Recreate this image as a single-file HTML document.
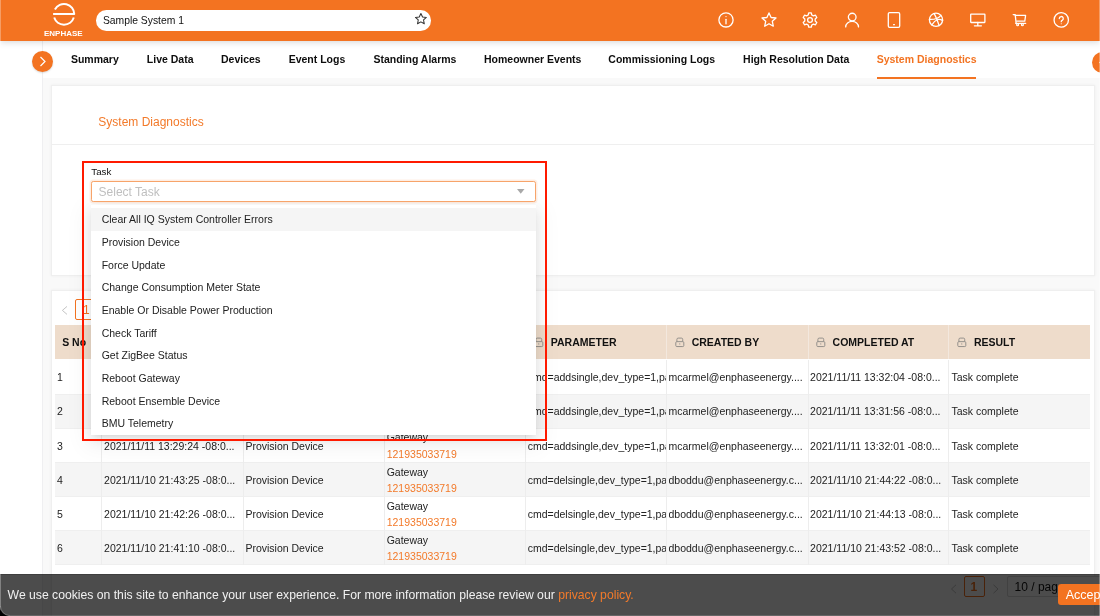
<!DOCTYPE html>
<html><head><meta charset="utf-8"><style>
*{box-sizing:border-box;margin:0;padding:0}
html,body{width:1100px;height:616px;overflow:hidden;background:#fff;font-family:"Liberation Sans",sans-serif;color:#222}
.a{position:absolute}
.t{position:absolute;white-space:nowrap;line-height:1}
.tab{position:absolute;top:54.4px;font-size:10.5px;font-weight:bold;color:#1a1a1a;line-height:1;white-space:nowrap}
.card{position:absolute;background:#fff;border:1px solid #efefef;box-shadow:0 0 3px rgba(0,0,0,.05)}
.hd{position:absolute;font-size:10.5px;font-weight:bold;color:#111;line-height:1;white-space:nowrap}
.cell{position:absolute;font-size:10.5px;color:#222;line-height:1;white-space:nowrap;overflow:hidden;padding:2px 0 3px;margin-top:-2px}
.vl{position:absolute;width:1px;background:#ededed}
.dd{position:absolute;left:10.5px;font-size:10.5px;color:#222;line-height:1;white-space:nowrap}
svg{position:absolute;overflow:visible}
#root{position:absolute;left:0;top:0;width:1100px;height:616px;will-change:transform}
</style></head><body><div id="root">
<div class="a" style="left:42px;top:40px;width:1058px;height:576px;background:#f9f9f9"></div>
<div class="a" style="left:42.4px;top:40px;width:1px;height:576px;background:#efeff1"></div>
<div class="a" style="left:43px;top:40px;width:1057px;height:38px;background:#fff"></div>
<div class="tab" style="left:70.9px;color:#0d0d0d">Summary</div>
<div class="tab" style="left:146.8px;color:#0d0d0d">Live Data</div>
<div class="tab" style="left:221px;color:#0d0d0d">Devices</div>
<div class="tab" style="left:288.7px;color:#0d0d0d">Event Logs</div>
<div class="tab" style="left:373.4px;color:#0d0d0d">Standing Alarms</div>
<div class="tab" style="left:484px;color:#0d0d0d">Homeowner Events</div>
<div class="tab" style="left:608.3px;color:#0d0d0d">Commissioning Logs</div>
<div class="tab" style="left:743.1px;color:#0d0d0d">High Resolution Data</div>
<div class="tab" style="left:876.7px;color:#f37321">System Diagnostics</div>
<div class="a" style="left:876.7px;top:76.8px;width:99.5px;height:2px;background:#f37321"></div>
<div class="a" style="left:31.6px;top:51.2px;width:21px;height:21px;border-radius:50%;background:#f37321;box-shadow:0 1px 2px rgba(0,0,0,.15)"></div>
<svg style="left:31.6px;top:51.2px" width="21" height="21"><path d="M8.5 6 L13 10.5 L8.5 15" fill="none" stroke="#fff" stroke-width="1.2"/></svg>
<div class="a" style="left:1092px;top:51.6px;width:21px;height:21px;border-radius:50%;background:#f37321"></div>
<svg style="left:1092px;top:51.6px" width="21" height="21"><path d="M12.5 6 L8 10.5 L12.5 15" fill="none" stroke="#fff" stroke-width="1.2"/></svg>
<div class="a" style="left:0;top:0;width:1100px;height:40.5px;background:#f37321;box-shadow:0 1px 7px rgba(0,0,0,.17)"></div>
<div class="card" style="left:50.5px;top:85px;width:1044px;height:190.5px"></div>
<div class="a" style="left:51.5px;top:144.2px;width:1042px;height:1px;background:#efefef"></div>
<div class="t" style="left:98.3px;top:116px;font-size:12px;color:#f37a2a">System Diagnostics</div>
<div class="card" style="left:50.5px;top:290px;width:1044px;height:340px"></div>
<svg style="left:61px;top:305.5px" width="8" height="10"><path d="M6 0.4 L1.4 4.4 L6 8.4" fill="none" stroke="#c4c4c4" stroke-width="1"/></svg>
<div class="a" style="left:75.2px;top:299px;width:21px;height:20.7px;border:1px solid #f37321;border-radius:2px"></div>
<div class="t" style="left:83px;top:303.5px;font-size:12px;color:#f37321">1</div>
<div class="a" style="left:55.2px;top:325.4px;width:1034.3999999999999px;height:34px;background:#eedccb"></div>
<div class="a" style="left:55.2px;top:360.40px;width:1034.3999999999999px;height:34.17px;background:#fff"></div>
<div class="a" style="left:55.2px;top:393.57px;width:1034.3999999999999px;height:1px;background:#efefef"></div>
<div class="cell" style="left:57px;top:372.30px">1</div>
<div class="cell" style="left:527.7px;top:372.30px;width:138.69999999999993px">cmd=addsingle,dev_type=1,pa</div>
<div class="cell" style="left:668.5px;top:372.30px">mcarmel@enphaseenergy....</div>
<div class="cell" style="left:810.1px;top:372.30px">2021/11/11 13:32:04 -08:0...</div>
<div class="cell" style="left:951.4px;top:372.30px">Task complete</div>
<div class="a" style="left:55.2px;top:394.57px;width:1034.3999999999999px;height:34.17px;background:#f5f5f5"></div>
<div class="a" style="left:55.2px;top:427.74px;width:1034.3999999999999px;height:1px;background:#efefef"></div>
<div class="cell" style="left:57px;top:406.47px">2</div>
<div class="cell" style="left:527.7px;top:406.47px;width:138.69999999999993px">cmd=addsingle,dev_type=1,pa</div>
<div class="cell" style="left:668.5px;top:406.47px">mcarmel@enphaseenergy....</div>
<div class="cell" style="left:810.1px;top:406.47px">2021/11/11 13:31:56 -08:0...</div>
<div class="cell" style="left:951.4px;top:406.47px">Task complete</div>
<div class="a" style="left:55.2px;top:428.74px;width:1034.3999999999999px;height:34.17px;background:#fff"></div>
<div class="a" style="left:55.2px;top:461.91px;width:1034.3999999999999px;height:1px;background:#efefef"></div>
<div class="cell" style="left:57px;top:440.64px">3</div>
<div class="cell" style="left:104.1px;top:440.64px">2021/11/11 13:29:24 -08:0...</div>
<div class="cell" style="left:245.4px;top:440.64px">Provision Device</div>
<div class="cell" style="left:386.7px;top:432.34px">Gateway</div>
<div class="cell" style="left:386.7px;top:448.64px;color:#f37a2a">121935033719</div>
<div class="cell" style="left:527.7px;top:440.64px;width:138.69999999999993px">cmd=addsingle,dev_type=1,pa</div>
<div class="cell" style="left:668.5px;top:440.64px">mcarmel@enphaseenergy....</div>
<div class="cell" style="left:810.1px;top:440.64px">2021/11/11 13:32:01 -08:0...</div>
<div class="cell" style="left:951.4px;top:440.64px">Task complete</div>
<div class="a" style="left:55.2px;top:462.91px;width:1034.3999999999999px;height:34.17px;background:#f5f5f5"></div>
<div class="a" style="left:55.2px;top:496.08px;width:1034.3999999999999px;height:1px;background:#efefef"></div>
<div class="cell" style="left:57px;top:474.81px">4</div>
<div class="cell" style="left:104.1px;top:474.81px">2021/11/10 21:43:25 -08:0...</div>
<div class="cell" style="left:245.4px;top:474.81px">Provision Device</div>
<div class="cell" style="left:386.7px;top:466.51px">Gateway</div>
<div class="cell" style="left:386.7px;top:482.81px;color:#f37a2a">121935033719</div>
<div class="cell" style="left:527.7px;top:474.81px;width:138.69999999999993px">cmd=delsingle,dev_type=1,pa</div>
<div class="cell" style="left:668.5px;top:474.81px">dboddu@enphaseenergy.c...</div>
<div class="cell" style="left:810.1px;top:474.81px">2021/11/10 21:44:22 -08:0...</div>
<div class="cell" style="left:951.4px;top:474.81px">Task complete</div>
<div class="a" style="left:55.2px;top:497.08px;width:1034.3999999999999px;height:34.17px;background:#fff"></div>
<div class="a" style="left:55.2px;top:530.25px;width:1034.3999999999999px;height:1px;background:#efefef"></div>
<div class="cell" style="left:57px;top:508.98px">5</div>
<div class="cell" style="left:104.1px;top:508.98px">2021/11/10 21:42:26 -08:0...</div>
<div class="cell" style="left:245.4px;top:508.98px">Provision Device</div>
<div class="cell" style="left:386.7px;top:500.68px">Gateway</div>
<div class="cell" style="left:386.7px;top:516.98px;color:#f37a2a">121935033719</div>
<div class="cell" style="left:527.7px;top:508.98px;width:138.69999999999993px">cmd=delsingle,dev_type=1,pa</div>
<div class="cell" style="left:668.5px;top:508.98px">dboddu@enphaseenergy.c...</div>
<div class="cell" style="left:810.1px;top:508.98px">2021/11/10 21:44:13 -08:0...</div>
<div class="cell" style="left:951.4px;top:508.98px">Task complete</div>
<div class="a" style="left:55.2px;top:531.25px;width:1034.3999999999999px;height:34.17px;background:#f5f5f5"></div>
<div class="a" style="left:55.2px;top:564.42px;width:1034.3999999999999px;height:1px;background:#efefef"></div>
<div class="cell" style="left:57px;top:543.15px">6</div>
<div class="cell" style="left:104.1px;top:543.15px">2021/11/10 21:41:10 -08:0...</div>
<div class="cell" style="left:245.4px;top:543.15px">Provision Device</div>
<div class="cell" style="left:386.7px;top:534.85px">Gateway</div>
<div class="cell" style="left:386.7px;top:551.15px;color:#f37a2a">121935033719</div>
<div class="cell" style="left:527.7px;top:543.15px;width:138.69999999999993px">cmd=delsingle,dev_type=1,pa</div>
<div class="cell" style="left:668.5px;top:543.15px">dboddu@enphaseenergy.c...</div>
<div class="cell" style="left:810.1px;top:543.15px">2021/11/10 21:43:52 -08:0...</div>
<div class="cell" style="left:951.4px;top:543.15px">Task complete</div>
<div class="vl" style="left:100.8px;top:360.4px;height:205.02px"></div>
<div class="vl" style="left:100.8px;top:325.4px;height:34px;background:#f3e8de"></div>
<div class="vl" style="left:243.0px;top:360.4px;height:205.02px"></div>
<div class="vl" style="left:243.0px;top:325.4px;height:34px;background:#f3e8de"></div>
<div class="vl" style="left:383.5px;top:360.4px;height:205.02px"></div>
<div class="vl" style="left:383.5px;top:325.4px;height:34px;background:#f3e8de"></div>
<div class="vl" style="left:525.0px;top:360.4px;height:205.02px"></div>
<div class="vl" style="left:525.0px;top:325.4px;height:34px;background:#f3e8de"></div>
<div class="vl" style="left:665.9px;top:360.4px;height:205.02px"></div>
<div class="vl" style="left:665.9px;top:325.4px;height:34px;background:#f3e8de"></div>
<div class="vl" style="left:807.7px;top:360.4px;height:205.02px"></div>
<div class="vl" style="left:807.7px;top:325.4px;height:34px;background:#f3e8de"></div>
<div class="vl" style="left:948.1px;top:360.4px;height:205.02px"></div>
<div class="vl" style="left:948.1px;top:325.4px;height:34px;background:#f3e8de"></div>
<div class="hd" style="left:62.2px;top:337.3px">S No</div>
<svg style="left:534.0px;top:337px" width="10" height="10" viewBox="0 0 10 10"><rect x="0.8" y="4.65" width="8" height="4.9" rx="1" fill="none" stroke="#8f8c88" stroke-width="0.95"/><path d="M1.9 4.65 V2.4 A1.3 1.3 0 0 1 3.2 1.1 H6.4 A1.3 1.3 0 0 1 7.7 2.4 V4.65" fill="none" stroke="#8f8c88" stroke-width="0.95"/><circle cx="4.8" cy="6.9" r="0.55" fill="#8f8c88"/></svg>
<div class="hd" style="left:550.8px;top:337.3px">PARAMETER</div>
<svg style="left:674.9px;top:337px" width="10" height="10" viewBox="0 0 10 10"><rect x="0.8" y="4.65" width="8" height="4.9" rx="1" fill="none" stroke="#8f8c88" stroke-width="0.95"/><path d="M1.9 4.65 V2.4 A1.3 1.3 0 0 1 3.2 1.1 H6.4 A1.3 1.3 0 0 1 7.7 2.4 V4.65" fill="none" stroke="#8f8c88" stroke-width="0.95"/><circle cx="4.8" cy="6.9" r="0.55" fill="#8f8c88"/></svg>
<div class="hd" style="left:691.7px;top:337.3px">CREATED BY</div>
<svg style="left:815.8px;top:337px" width="10" height="10" viewBox="0 0 10 10"><rect x="0.8" y="4.65" width="8" height="4.9" rx="1" fill="none" stroke="#8f8c88" stroke-width="0.95"/><path d="M1.9 4.65 V2.4 A1.3 1.3 0 0 1 3.2 1.1 H6.4 A1.3 1.3 0 0 1 7.7 2.4 V4.65" fill="none" stroke="#8f8c88" stroke-width="0.95"/><circle cx="4.8" cy="6.9" r="0.55" fill="#8f8c88"/></svg>
<div class="hd" style="left:832.6px;top:337.3px">COMPLETED AT</div>
<svg style="left:957.1px;top:337px" width="10" height="10" viewBox="0 0 10 10"><rect x="0.8" y="4.65" width="8" height="4.9" rx="1" fill="none" stroke="#8f8c88" stroke-width="0.95"/><path d="M1.9 4.65 V2.4 A1.3 1.3 0 0 1 3.2 1.1 H6.4 A1.3 1.3 0 0 1 7.7 2.4 V4.65" fill="none" stroke="#8f8c88" stroke-width="0.95"/><circle cx="4.8" cy="6.9" r="0.55" fill="#8f8c88"/></svg>
<div class="hd" style="left:973.9px;top:337.3px">RESULT</div>
<div class="a" style="left:91px;top:205.4px;width:445px;height:229.8px;background:#fff;box-shadow:0 2.25px 4.5px -3px rgba(0,0,0,.12),0 4.5px 12px 0 rgba(0,0,0,.08),0 6.75px 21px 6px rgba(0,0,0,.05)"></div>
<div class="a" style="left:91px;top:207.6px;width:445px;height:23px;background:#f5f5f5"></div>
<div class="dd" style="left:101.7px;top:214.30px">Clear All IQ System Controller Errors</div>
<div class="dd" style="left:101.7px;top:236.97px">Provision Device</div>
<div class="dd" style="left:101.7px;top:259.64px">Force Update</div>
<div class="dd" style="left:101.7px;top:282.31px">Change Consumption Meter State</div>
<div class="dd" style="left:101.7px;top:304.98px">Enable Or Disable Power Production</div>
<div class="dd" style="left:101.7px;top:327.65px">Check Tariff</div>
<div class="dd" style="left:101.7px;top:350.32px">Get ZigBee Status</div>
<div class="dd" style="left:101.7px;top:372.99px">Reboot Gateway</div>
<div class="dd" style="left:101.7px;top:395.66px">Reboot Ensemble Device</div>
<div class="dd" style="left:101.7px;top:418.33px">BMU Telemetry</div>
<div class="t" style="left:91.3px;top:166.6px;font-size:9.75px;color:#111">Task</div>
<div class="a" style="left:90.5px;top:181.2px;width:445.5px;height:21px;border:1px solid #f7a46a;border-radius:2.25px;box-shadow:0 0 0 1.5px rgba(243,115,33,.12);background:#fff"></div>
<div class="t" style="left:98.6px;top:186px;font-size:12px;color:#bfbfbf">Select Task</div>
<svg style="left:517px;top:189.3px" width="8" height="5"><path d="M0 0 H7.5 L3.75 4.8 Z" fill="#a8a8a8"/></svg>
<div class="a" style="left:82px;top:160.8px;width:464.9px;height:279.8px;border:2px solid #ff1a00"></div>
<svg style="left:52px;top:2px" width="25" height="26" viewBox="0 0 25 26"><path d="M2.9 7.5 A10.3 10.3 0 0 1 22.3 12.2" fill="none" stroke="#fff" stroke-width="2"/><path d="M1.1 12 H22.9" stroke="#fff" stroke-width="2"/><path d="M2.2 15.5 A10.3 10.3 0 0 0 21.8 15.5" fill="none" stroke="#fff" stroke-width="2"/></svg>
<div class="t" style="left:44px;top:29.6px;font-size:8px;font-weight:bold;color:#fff;letter-spacing:0px">ENPHASE</div>
<div class="a" style="left:96px;top:9.9px;width:334.5px;height:20.7px;border-radius:10.35px;background:#fff"></div>
<div class="t" style="left:102.9px;top:16.2px;font-size:10.35px;color:#111">Sample System 1</div>
<svg style="left:413.6px;top:11.9px" width="13.8" height="13.8" viewBox="0 0 24 24"><path d="M12 2.5 L14.9 8.6 L21.5 9.4 L16.6 13.9 L17.9 20.5 L12 17.2 L6.1 20.5 L7.4 13.9 L2.5 9.4 L9.1 8.6 Z" fill="none" stroke="#333" stroke-width="1.8" stroke-linejoin="round"/></svg>
<svg style="left:717.4px;top:11.0px" width="18" height="18" viewBox="0 0 18 18"><circle cx="9" cy="8.9" r="7.1" fill="none" stroke="#fff" stroke-width="1.3" stroke-linecap="round" stroke-linejoin="round"/><path d="M9 8.3 V12.8" fill="none" stroke="#fff" stroke-width="1.3" stroke-linecap="round" stroke-linejoin="round"/><circle cx="9" cy="5.6" r="0.65" fill="#fff"/></svg>
<svg style="left:759.9px;top:11.0px" width="18" height="18" viewBox="0 0 18 18"><path d="M9 1.9 L11.1 6.5 L16 7 L12.3 10.3 L13.3 15.2 L9 12.7 L4.7 15.2 L5.7 10.3 L2 7 L6.9 6.5 Z" fill="none" stroke="#fff" stroke-width="1.3" stroke-linecap="round" stroke-linejoin="round"/></svg>
<svg style="left:801.0px;top:11.0px" width="18" height="18" viewBox="0 0 18 18"><path d="M7.7 1.8 H10.3 L10.8 4 L12.4 4.9 L14.5 4.2 L15.8 6.5 L14.2 8 V10 L15.8 11.5 L14.5 13.8 L12.4 13.1 L10.8 14 L10.3 16.2 H7.7 L7.2 14 L5.6 13.1 L3.5 13.8 L2.2 11.5 L3.8 10 V8 L2.2 6.5 L3.5 4.2 L5.6 4.9 L7.2 4 Z" fill="none" stroke="#fff" stroke-width="1.3" stroke-linecap="round" stroke-linejoin="round"/><circle cx="9" cy="9" r="2.4" fill="none" stroke="#fff" stroke-width="1.3" stroke-linecap="round" stroke-linejoin="round"/></svg>
<svg style="left:843.0px;top:11.0px" width="18" height="18" viewBox="0 0 18 18"><circle cx="9.2" cy="6.1" r="3.85" fill="none" stroke="#fff" stroke-width="1.3" stroke-linecap="round" stroke-linejoin="round"/><path d="M2.7 15.9 A6.4 5.6 0 0 1 15.5 15.9" fill="none" stroke="#fff" stroke-width="1.3" stroke-linecap="round" stroke-linejoin="round"/></svg>
<svg style="left:885.0px;top:11.0px" width="18" height="18" viewBox="0 0 18 18"><rect x="3.3" y="1.7" width="11.4" height="14.6" rx="1.3" fill="none" stroke="#fff" stroke-width="1.3" stroke-linecap="round" stroke-linejoin="round"/><path d="M8.6 13.7 H9.4" fill="none" stroke="#fff" stroke-width="1.3" stroke-linecap="round" stroke-linejoin="round"/></svg>
<svg style="left:926.6px;top:11.0px" width="18" height="18" viewBox="0 0 18 18"><circle cx="9" cy="8.8" r="6.6" fill="none" stroke="#fff" stroke-width="1.3" stroke-linecap="round" stroke-linejoin="round"/><path d="M7.15 2.6 Q9.3 6.3 12.15 14.6" fill="none" stroke="#fff" stroke-width="1.3" stroke-linecap="round" stroke-linejoin="round"/><path d="M2.4 8.4 Q10.2 8.8 13.9 4.3" fill="none" stroke="#fff" stroke-width="1.3" stroke-linecap="round" stroke-linejoin="round"/><path d="M4.8 14 Q10 5.7 15.7 9.6" fill="none" stroke="#fff" stroke-width="1.3" stroke-linecap="round" stroke-linejoin="round"/></svg>
<svg style="left:968.5px;top:11.0px" width="18" height="18" viewBox="0 0 18 18"><rect x="1.7" y="3.2" width="14.2" height="8.3" rx="0.4" fill="none" stroke="#fff" stroke-width="1.3" stroke-linecap="round" stroke-linejoin="round"/><path d="M8.8 11.5 V14.6 M5.4 14.8 H12.4" fill="none" stroke="#fff" stroke-width="1.3" stroke-linecap="round" stroke-linejoin="round"/></svg>
<svg style="left:1010.3px;top:11.0px" width="18" height="18" viewBox="0 0 18 18"><path d="M3.2 3.6 H5.2 L6.1 11.9" fill="none" stroke="#fff" stroke-width="1.3" stroke-linecap="round" stroke-linejoin="round"/><path d="M5.3 4.4 H15.6 L14.8 10.1 H6.6" fill="none" stroke="#fff" stroke-width="1.3" stroke-linecap="round" stroke-linejoin="round"/><path d="M5.7 12.3 H15.7" fill="none" stroke="#fff" stroke-width="1.3" stroke-linecap="round" stroke-linejoin="round"/><circle cx="7.6" cy="13.8" r="1" fill="none" stroke="#fff" stroke-width="1.1"/><circle cx="12.4" cy="13.8" r="1" fill="none" stroke="#fff" stroke-width="1.1"/></svg>
<svg style="left:1052.0px;top:11.0px" width="18" height="18" viewBox="0 0 18 18"><circle cx="9.25" cy="8.9" r="7.2" fill="none" stroke="#fff" stroke-width="1.3" stroke-linecap="round" stroke-linejoin="round"/><path d="M7.3 7.5 A2.0 2.0 0 1 1 10.2 9.3 C9.5 9.7 9.25 10.0 9.25 10.7" fill="none" stroke="#fff" stroke-width="1.3" stroke-linecap="round" stroke-linejoin="round"/><circle cx="9.25" cy="12.7" r="0.55" fill="#fff"/></svg>
<svg style="left:950px;top:583.5px" width="8" height="10"><path d="M6 0.8 L1.5 5 L6 9.2" fill="none" stroke="#c4c4c4" stroke-width="1"/></svg>
<div class="a" style="left:963.7px;top:576.2px;width:21.2px;height:21px;border:1px solid #f37321;border-radius:2px;background:#fff"></div>
<div class="t" style="left:970.6px;top:581px;font-size:12px;font-weight:bold;color:#f37321">1</div>
<svg style="left:991.5px;top:583.5px" width="8" height="10"><path d="M1.5 0.8 L6 5 L1.5 9.2" fill="none" stroke="#c4c4c4" stroke-width="1"/></svg>
<div class="a" style="left:1007.3px;top:576.2px;width:120px;height:21px;border:1px solid #d9d9d9;border-radius:2px;background:#fff"></div>
<div class="t" style="left:1014.6px;top:580.6px;font-size:12px;color:#111">10 / page</div>
<div class="a" style="left:0;top:574px;width:1100px;height:42px;background:rgba(0,0,0,.7)"></div>
<div class="a" style="left:0;top:574px;width:1100px;height:1px;background:rgba(0,0,0,.18)"></div>
<div class="t" style="left:7.6px;top:588.5px;font-size:12.2px;color:#f0f0f0">We use cookies on this site to enhance your user experience. For more information please review our <span style="color:#f37a2a">privacy policy.</span></div>
<div class="a" style="left:1058.3px;top:584px;width:60px;height:21px;border-radius:3px;background:#f37321"></div>
<div class="t" style="left:1065.7px;top:588.5px;font-size:12.5px;color:#fff">Accept</div>
<div class="a" style="left:0;top:0;width:1px;height:616px;background:rgba(255,255,255,.3)"></div>
<div class="a" style="left:1099px;top:0;width:1px;height:616px;background:rgba(255,255,255,.3)"></div>
<div class="a" style="left:0;top:614.5px;width:1100px;height:1.5px;background:rgba(255,255,255,.15)"></div>
<svg style="left:0;top:606px" width="10" height="10" viewBox="0 0 10 10"><path d="M0 0 A9.5 9.5 0 0 0 9.5 10 H0 Z" fill="#000"/><path d="M0.5 0 A9.5 9.5 0 0 0 9.5 9.5" fill="none" stroke="rgba(255,255,255,.2)" stroke-width="1"/></svg>
</div></body></html>
